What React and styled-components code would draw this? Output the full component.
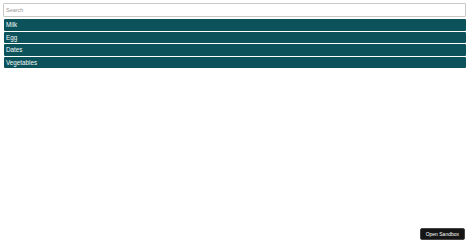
import React, { useState } from "react";
import styled, { createGlobalStyle } from "styled-components";

const Global = createGlobalStyle`
  html, body { margin: 0; padding: 0; background: #fff; }
  body { font-family: "Liberation Sans", Arial, sans-serif; }
`;

const Page = styled.div`
  display: flex;
  flex-direction: column;
  padding: 3px 8px 0 3px;
`;

const SearchInput = styled.input`
  box-sizing: border-box;
  width: 100%;
  height: 14px;
  margin: 0 0 1px 0;
  padding: 0 2px;
  border: 1px solid #c8c8c8;
  border-radius: 1px;
  font-family: "Liberation Sans", Arial, sans-serif;
  font-size: 5.5px;
  color: #333;
  outline: none;
  &::placeholder { color: #999; }
`;

const List = styled.div`
  display: flex;
  flex-direction: column;
  gap: 1px;
  padding-left: 1px;
  margin-top: 1px;
`;

const Item = styled.div`
  box-sizing: border-box;
  height: 11.6px;
  display: flex;
  align-items: center;
  padding: 0 2px;
  background: #0b525b;
  color: #f4f8f8;
  font-size: 6.3px;
  border-radius: 1px;
`;

const SandboxButton = styled.button`
  position: fixed;
  right: 9px;
  bottom: 8px;
  height: 12px;
  padding: 0 5px;
  background: #151515;
  color: #fff;
  border: 1px solid #444;
  border-radius: 2px;
  font-family: "Liberation Sans", Arial, sans-serif;
  font-size: 5px;
  cursor: pointer;
`;

const items = ["Milk", "Egg", "Dates", "Vegetables"];

export default function App() {
  const [q, setQ] = useState("");
  const shown = items.filter((i) => i.toLowerCase().includes(q.toLowerCase()));
  return (
    <>
      <Global />
      <Page>
        <SearchInput placeholder="Search" value={q} onChange={(e) => setQ(e.target.value)} />
        <List>
          {shown.map((i) => (
            <Item key={i}>{i}</Item>
          ))}
        </List>
      </Page>
      <SandboxButton>Open Sandbox</SandboxButton>
    </>
  );
}
